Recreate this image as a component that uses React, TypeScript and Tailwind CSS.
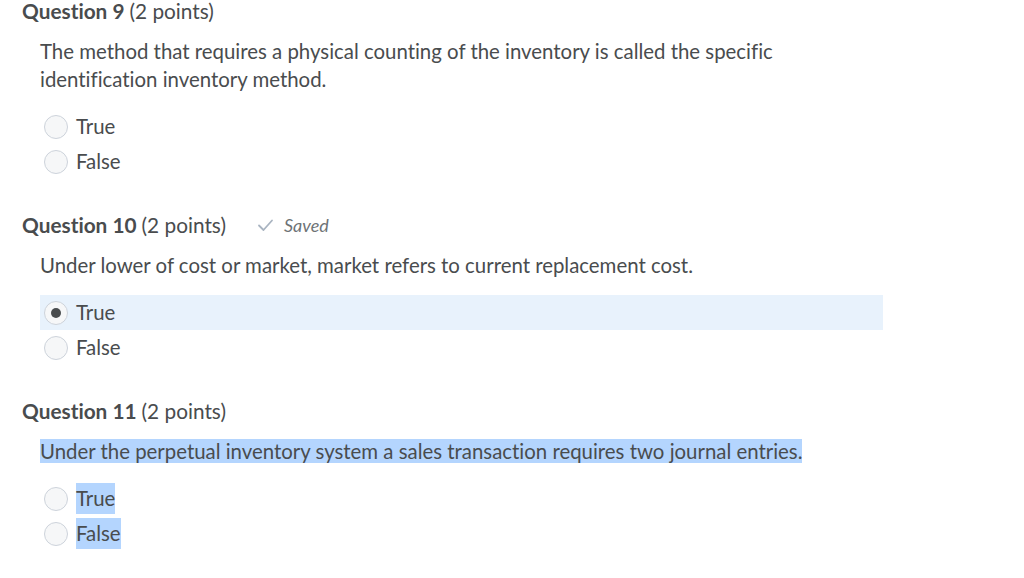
import React from 'react';

interface Question {
  num: number;
  points: number;
  text: string[];
  selected?: 'True' | 'False';
  saved?: boolean;
  highlighted?: boolean;
}

const questions: Question[] = [
  {
    num: 9,
    points: 2,
    text: [
      'The method that requires a physical counting of the inventory is called the specific',
      'identification inventory method.',
    ],
  },
  {
    num: 10,
    points: 2,
    text: ['Under lower of cost or market, market refers to current replacement cost.'],
    selected: 'True',
    saved: true,
  },
  {
    num: 11,
    points: 2,
    text: ['Under the perpetual inventory system a sales transaction requires two journal entries.'],
    highlighted: true,
  },
];

function Radio({ checked }: { checked: boolean }) {
  return (
    <span className="flex h-6 w-6 items-center justify-center rounded-full border border-[#cdd3db] bg-[#f6f7f8]">
      {checked && <span className="h-[10px] w-[10px] rounded-full bg-[#494c4e]" />}
    </span>
  );
}

function QuestionBlock({ q }: { q: Question }) {
  const sel = q.highlighted ? 'bg-[#b4d5fe]' : '';
  return (
    <div>
      <div className="flex items-center px-[22px] text-[20.8px] leading-[22px]">
        <span className="font-bold">Question {q.num}</span>
        <span className="ml-[5px]">({q.points} points)</span>
        {q.saved && (
          <span className="ml-[31px] flex items-center gap-[10px] text-[18px] italic text-[#6e7376]">
            <svg width="17" height="14" viewBox="0 0 17 14" fill="none">
              <path d="M2 7.5 L6.5 12 L15 2.5" stroke="#a9b4c1" strokeWidth="1.8" strokeLinecap="round" strokeLinejoin="round" />
            </svg>
            Saved
          </span>
        )}
      </div>
      <div className="mt-[15px] pl-10 text-[20.4px] leading-[28px]">
        {q.text.map((line, i) => (
          <div key={i}>
            <span className={sel}>{line}</span>
          </div>
        ))}
      </div>
      <div className="mt-4 pl-10">
        {(['True', 'False'] as const).map((opt) => {
          const checked = q.selected === opt;
          return (
            <div
              key={opt}
              className={`flex h-[35px] w-[843px] items-center gap-2 pl-1 text-[20.4px] ${checked ? 'bg-[#e8f2fc]' : ''}`}
            >
              <Radio checked={checked} />
              <span className={sel}>{opt}</span>
            </div>
          );
        })}
      </div>
    </div>
  );
}

export default function App() {
  return (
    <div
      className="flex h-[578px] w-[1024px] flex-col gap-[35px] overflow-hidden bg-white text-[#494c4e] [font-variant-ligatures:none]"
      style={{ fontFamily: 'Lato, "Noto Sans", sans-serif' }}
    >
      {questions.map((q) => (
        <QuestionBlock key={q.num} q={q} />
      ))}
    </div>
  );
}
